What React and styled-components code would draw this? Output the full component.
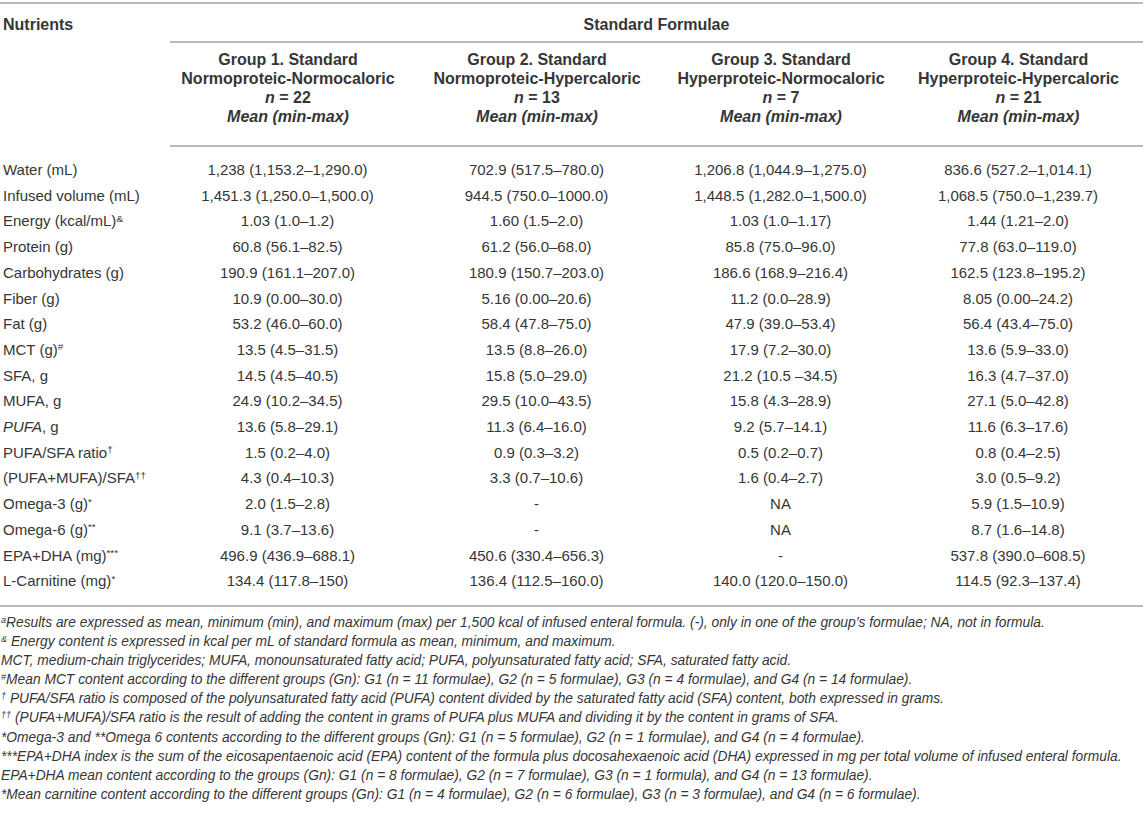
import React from 'react'
import styled, { createGlobalStyle } from 'styled-components'

const GlobalStyle = createGlobalStyle`
  html, body {
    margin: 0;
    padding: 0;
    background: #fff;
  }
  body {
    font-family: 'Liberation Sans', Arial, sans-serif;
    color: #363636;
  }
`

const Page = styled.div`
  width: 1143px;
  padding-top: 2px;
`

const Table = styled.table`
  width: 100%;
  border-collapse: collapse;
  border-top: 2px solid #b8b8b8;
  border-bottom: 2px solid #b8b8b8;
  font-size: 15px;
  table-layout: fixed;
`

const HeadCell = styled.th`
  font-weight: bold;
  font-size: 16px;
  line-height: 19px;
  text-align: ${p => (p.$left ? 'left' : 'center')};
  vertical-align: top;
  padding: ${p => p.$pad || '0'};
  border-bottom: ${p => (p.$rule ? '2px solid #b8b8b8' : 'none')};
  padding-left: ${p => (p.$left ? '3px' : '0')};
  white-space: nowrap;
`

const Italic = styled.span`
  font-style: italic;
`

const Row = styled.tr`
  td {
    padding-top: ${p => (p.$first ? '10px' : '0')};
    padding-bottom: ${p => (p.$last ? '11px' : '0')};
  }
`

const Cell = styled.td`
  line-height: 25.7px;
  height: 25.7px;
  text-align: ${p => (p.$left ? 'left' : 'center')};
  padding-left: ${p => (p.$left ? '3px' : '0')};
  white-space: nowrap;
`

const Sup = styled.sup`
  font-size: 0.66em;
  line-height: 0;
  vertical-align: ${p => p.$raise || '0.45em'};
  position: relative;
`

const Notes = styled.div`
  padding: 6px 0 0 1px;
  font-size: 13.8px;
  line-height: 19.1px;
  font-style: italic;
`

const Note = styled.div`
  white-space: nowrap;
`

const colWidths = [170, 236, 262, 226, 249]

const groups = [
  ['Group 1. Standard', 'Normoproteic-Normocaloric', '22'],
  ['Group 2. Standard', 'Normoproteic-Hypercaloric', '13'],
  ['Group 3. Standard', 'Hyperproteic-Normocaloric', '7'],
  ['Group 4. Standard', 'Hyperproteic-Hypercaloric', '21'],
]

const rows = [
  ['Water (mL)', null, '1,238 (1,153.2–1,290.0)', '702.9 (517.5–780.0)', '1,206.8 (1,044.9–1,275.0)', '836.6 (527.2–1,014.1)'],
  ['Infused volume (mL)', null, '1,451.3 (1,250.0–1,500.0)', '944.5 (750.0–1000.0)', '1,448.5 (1,282.0–1,500.0)', '1,068.5 (750.0–1,239.7)'],
  ['Energy (kcal/mL)', '&', '1.03 (1.0–1.2)', '1.60 (1.5–2.0)', '1.03 (1.0–1.17)', '1.44 (1.21–2.0)'],
  ['Protein (g)', null, '60.8 (56.1–82.5)', '61.2 (56.0–68.0)', '85.8 (75.0–96.0)', '77.8 (63.0–119.0)'],
  ['Carbohydrates (g)', null, '190.9 (161.1–207.0)', '180.9 (150.7–203.0)', '186.6 (168.9–216.4)', '162.5 (123.8–195.2)'],
  ['Fiber (g)', null, '10.9 (0.00–30.0)', '5.16 (0.00–20.6)', '11.2 (0.0–28.9)', '8.05 (0.00–24.2)'],
  ['Fat (g)', null, '53.2 (46.0–60.0)', '58.4 (47.8–75.0)', '47.9 (39.0–53.4)', '56.4 (43.4–75.0)'],
  ['MCT (g)', '#', '13.5 (4.5–31.5)', '13.5 (8.8–26.0)', '17.9 (7.2–30.0)', '13.6 (5.9–33.0)'],
  ['SFA, g', null, '14.5 (4.5–40.5)', '15.8 (5.0–29.0)', '21.2 (10.5 –34.5)', '16.3 (4.7–37.0)'],
  ['MUFA, g', null, '24.9 (10.2–34.5)', '29.5 (10.0–43.5)', '15.8 (4.3–28.9)', '27.1 (5.0–42.8)'],
  ['PUFA', 'italic', '13.6 (5.8–29.1)', '11.3 (6.4–16.0)', '9.2 (5.7–14.1)', '11.6 (6.3–17.6)'],
  ['PUFA/SFA ratio', '†', '1.5 (0.2–4.0)', '0.9 (0.3–3.2)', '0.5 (0.2–0.7)', '0.8 (0.4–2.5)'],
  ['(PUFA+MUFA)/SFA', '††', '4.3 (0.4–10.3)', '3.3 (0.7–10.6)', '1.6 (0.4–2.7)', '3.0 (0.5–9.2)'],
  ['Omega-3 (g)', '*', '2.0 (1.5–2.8)', '-', 'NA', '5.9 (1.5–10.9)'],
  ['Omega-6 (g)', '**', '9.1 (3.7–13.6)', '-', 'NA', '8.7 (1.6–14.8)'],
  ['EPA+DHA (mg)', '***', '496.9 (436.9–688.1)', '450.6 (330.4–656.3)', '-', '537.8 (390.0–608.5)'],
  ['L-Carnitine (mg)', '*', '134.4 (117.8–150)', '136.4 (112.5–160.0)', '140.0 (120.0–150.0)', '114.5 (92.3–137.4)'],
]

const Label = ({ text, mark }) => {
  if (mark === 'italic') {
    return (
      <>
        <Italic>{text}</Italic>, g
      </>
    )
  }
  return (
    <>
      {text}
      {mark && <Sup>{mark}</Sup>}
    </>
  )
}

const App = () => (
  <Page>
    <GlobalStyle />
    <Table>
      <colgroup>
        {colWidths.map((w, i) => (
          <col key={i} style={{ width: w }} />
        ))}
      </colgroup>
      <thead>
        <tr>
          <HeadCell $left rowSpan={2} $pad='11px 0 0 0'>
            Nutrients
          </HeadCell>
          <HeadCell colSpan={4} $rule $pad='11px 0 7px 0'>
            Standard Formulae
          </HeadCell>
        </tr>
        <tr>
          {groups.map(([a, b, n]) => (
            <HeadCell key={b} $rule $pad='7px 0 19px 0'>
              {a}
              <br />
              {b}
              <br />
              <Italic>n</Italic> = {n}
              <br />
              <Italic>Mean (min-max)</Italic>
            </HeadCell>
          ))}
        </tr>
      </thead>
      <tbody>
        {rows.map(([label, mark, ...vals], i) => (
          <Row key={label} $first={i === 0} $last={i === rows.length - 1}>
            <Cell $left>
              <Label text={label} mark={mark} />
            </Cell>
            {vals.map((v, j) => (
              <Cell key={j}>{v}</Cell>
            ))}
          </Row>
        ))}
      </tbody>
    </Table>
    <Notes>
      <Note>
        <Sup>a</Sup>Results are expressed as mean, minimum (min), and maximum (max) per 1,500 kcal of infused enteral
        formula. (-), only in one of the group’s formulae; NA, not in formula.
      </Note>
      <Note>
        <Sup>&amp;</Sup> Energy content is expressed in kcal per mL of standard formula as mean, minimum, and maximum.
      </Note>
      <Note>
        MCT, medium-chain triglycerides; MUFA, monounsaturated fatty acid; PUFA, polyunsaturated fatty acid; SFA,
        saturated fatty acid.
      </Note>
      <Note>
        <Sup>#</Sup>Mean MCT content according to the different groups (Gn): G1 (n = 11 formulae), G2 (n = 5 formulae),
        G3 (n = 4 formulae), and G4 (n = 14 formulae).
      </Note>
      <Note>
        <Sup>†</Sup> PUFA/SFA ratio is composed of the polyunsaturated fatty acid (PUFA) content divided by the saturated
        fatty acid (SFA) content, both expressed in grams.
      </Note>
      <Note>
        <Sup>††</Sup> (PUFA+MUFA)/SFA ratio is the result of adding the content in grams of PUFA plus MUFA and dividing it
        by the content in grams of SFA.
      </Note>
      <Note>
        *Omega-3 and **Omega 6 contents according to the different groups (Gn): G1 (n = 5 formulae), G2 (n = 1
        formulae), and G4 (n = 4 formulae).
      </Note>
      <Note>
        ***EPA+DHA index is the sum of the eicosapentaenoic acid (EPA) content of the formula plus docosahexaenoic acid
        (DHA) expressed in mg per total volume of infused enteral formula.
      </Note>
      <Note>
        EPA+DHA mean content according to the groups (Gn): G1 (n = 8 formulae), G2 (n = 7 formulae), G3 (n = 1
        formula), and G4 (n = 13 formulae).
      </Note>
      <Note>
        *Mean carnitine content according to the different groups (Gn): G1 (n = 4 formulae), G2 (n = 6 formulae), G3 (n =
        3 formulae), and G4 (n = 6 formulae).
      </Note>
    </Notes>
  </Page>
)

export default App
